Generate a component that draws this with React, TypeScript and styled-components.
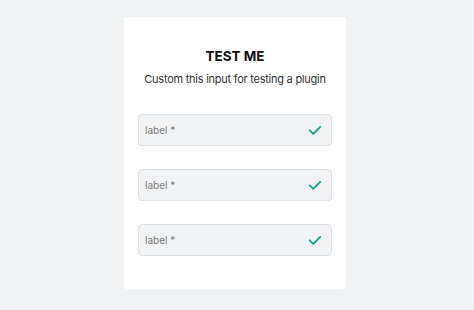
import { FC, ReactElement } from 'react';
import styled, { createGlobalStyle } from 'styled-components';

const GlobalStyle = createGlobalStyle`
  html, body {
    margin: 0;
    padding: 0;
    background: #f1f2f4;
    font-family: Inter, "Noto Sans", sans-serif;
  }
`;

const Page = styled.div`
  width: 474px;
  height: 310px;
  display: flex;
  justify-content: center;
  padding: 17px 4px 0 0;
  box-sizing: border-box;
`;

const Card = styled.div`
  width: 222px;
  height: 272px;
  background: #ffffff;
  border-radius: 3px;
  box-sizing: border-box;
  padding: 30px 14px 0 14px;
  display: flex;
  flex-direction: column;
`;

const Title = styled.h1`
  margin: 0;
  text-align: center;
  font-size: 13.5px;
  font-weight: 700;
  color: #111;
  line-height: 18px;
`;

const Subtitle = styled.p`
  margin: 6px 0 0 0;
  text-align: center;
  font-size: 11px;
  letter-spacing: -0.25px;
  white-space: nowrap;
  color: #333;
  line-height: 16px;
`;

const Fields = styled.div`
  margin-top: 27px;
  display: flex;
  flex-direction: column;
  gap: 23px;
`;

const Field = styled.div`
  height: 32px;
  box-sizing: border-box;
  border: 1px solid #dcdfe3;
  border-radius: 4px;
  background: #f1f3f5;
  display: flex;
  align-items: center;
  justify-content: space-between;
  padding: 0 9px 0 6px;
`;

const Label = styled.span`
  font-size: 10px;
  color: #7a7d80;
`;

const Check: FC = (): ReactElement => (
  <svg width="14" height="14" viewBox="0 0 24 24" fill="none">
    <path
      d="M3 12.5l6 6L21 6.5"
      stroke="#1aa38c"
      strokeWidth="3.2"
      strokeLinecap="round"
      strokeLinejoin="round"
    />
  </svg>
);

const App: FC = (): ReactElement => {
  return (
    <>
      <GlobalStyle />
      <Page>
        <Card>
          <Title>TEST ME</Title>
          <Subtitle>Custom this input for testing a plugin</Subtitle>
          <Fields>
            {[0, 1, 2].map((i) => (
              <Field key={i}>
                <Label>label *</Label>
                <Check />
              </Field>
            ))}
          </Fields>
        </Card>
      </Page>
    </>
  );
};

export default App;
